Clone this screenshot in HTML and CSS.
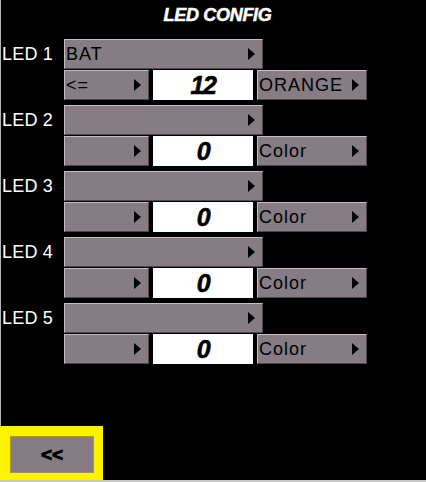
FILE: index.html
```html
<!DOCTYPE html>
<html>
<head>
<meta charset="utf-8">
<link rel="stylesheet" href="styles.css">
</head>
<body>
<div class="screen">
  <div class="title">LED CONFIG</div>
  <div class="groups">
    <div class="group">
      <div class="row">
        <div class="label">LED 1</div>
        <div class="sel sel-main"><span>BAT</span><i class="tri"></i></div>
      </div>
      <div class="row sub">
        <div class="sel sel-op"><span>&lt;=</span><i class="tri"></i></div>
        <div class="val">12</div>
        <div class="sel sel-color"><span>ORANGE</span><i class="tri"></i></div>
      </div>
    </div>
    <div class="group">
      <div class="row">
        <div class="label">LED 2</div>
        <div class="sel sel-main"><span></span><i class="tri"></i></div>
      </div>
      <div class="row sub">
        <div class="sel sel-op"><span></span><i class="tri"></i></div>
        <div class="val">0</div>
        <div class="sel sel-color"><span>Color</span><i class="tri"></i></div>
      </div>
    </div>
    <div class="group">
      <div class="row">
        <div class="label">LED 3</div>
        <div class="sel sel-main"><span></span><i class="tri"></i></div>
      </div>
      <div class="row sub">
        <div class="sel sel-op"><span></span><i class="tri"></i></div>
        <div class="val">0</div>
        <div class="sel sel-color"><span>Color</span><i class="tri"></i></div>
      </div>
    </div>
    <div class="group">
      <div class="row">
        <div class="label">LED 4</div>
        <div class="sel sel-main"><span></span><i class="tri"></i></div>
      </div>
      <div class="row sub">
        <div class="sel sel-op"><span></span><i class="tri"></i></div>
        <div class="val">0</div>
        <div class="sel sel-color"><span>Color</span><i class="tri"></i></div>
      </div>
    </div>
    <div class="group">
      <div class="row">
        <div class="label">LED 5</div>
        <div class="sel sel-main"><span></span><i class="tri"></i></div>
      </div>
      <div class="row sub">
        <div class="sel sel-op"><span></span><i class="tri"></i></div>
        <div class="val">0</div>
        <div class="sel sel-color"><span>Color</span><i class="tri"></i></div>
      </div>
    </div>
  </div>
  <div class="spacer"></div>
  <div class="footer">
    <div class="back-frame">
      <div class="back-btn">&lt;&lt;</div>
    </div>
  </div>
</div>
</body>
</html>
```
FILE: styles.css
```css
html, body {
  margin: 0;
  padding: 0;
  background: #c8c8c8;
  width: 426px;
  height: 482px;
  overflow: hidden;
}
.screen {
  box-sizing: border-box;
  width: 426px;
  height: 480px;
  background: #000;
  border-left: 1px solid #b4b4b4;
  display: flex;
  flex-direction: column;
  font-family: "Liberation Sans", Arial, sans-serif;
}
.title {
  height: 39px;
  box-sizing: border-box;
  padding-top: 4px;
  padding-left: 8px;
  text-align: center;
  color: #fff;
  font-weight: bold;
  font-style: italic;
  font-size: 18px;
  line-height: 22px;
  letter-spacing: -0.3px;
  -webkit-text-stroke: 0.5px #fff;
}
.groups {
  display: flex;
  flex-direction: column;
}
.group {
  display: flex;
  flex-direction: column;
  gap: 1px;
  margin-bottom: 5px;
}
.row {
  display: flex;
  align-items: center;
}
.label {
  width: 63px;
  box-sizing: border-box;
  padding-left: 1px;
  color: #fff;
  font-size: 18px;
  line-height: 30px;
  letter-spacing: 0.2px;
  white-space: nowrap;
}
.sub {
  padding-left: 63px;
}
.sel {
  box-sizing: border-box;
  display: flex;
  align-items: center;
  justify-content: space-between;
  background: #857c84;
  border-top: 1px solid #c4bcc2;
  border-left: 1px solid #c4bcc2;
  border-bottom: 1px solid #4e484c;
  border-right: 1px solid #4e484c;
  color: #000;
  font-size: 18px;
  letter-spacing: 1px;
  padding-left: 1px;
  padding-right: 7px;
  white-space: nowrap;
}
.sel-main {
  width: 199px;
  height: 30px;
}
.sel-op {
  width: 85px;
  height: 30px;
  margin-right: 4px;
}
.sel-color {
  width: 110px;
  height: 30px;
  margin-left: 4px;
}
.tri {
  width: 0;
  height: 0;
  border-top: 6px solid transparent;
  border-bottom: 6px solid transparent;
  border-left: 7px solid #000;
  flex: none;
}
.val {
  width: 100px;
  height: 30px;
  background: #fff;
  color: #000;
  text-align: center;
  font-weight: bold;
  font-style: italic;
  font-size: 25px;
  line-height: 30px;
  letter-spacing: -1.5px;
  -webkit-text-stroke: 0.6px #000;
}
.spacer {
  flex: 1;
}
.footer {
  display: flex;
  height: 54px;
  margin-left: -1px;
}
.back-frame {
  width: 103px;
  height: 54px;
  box-sizing: border-box;
  background: #fff200;
  padding: 10px 9px 7px 10px;
}
.back-btn {
  box-sizing: border-box;
  height: 37px;
  background: #857c84;
  border: 1px solid #a89a3c;
  display: flex;
  align-items: center;
  justify-content: center;
  font-weight: bold;
  font-size: 19px;
  color: #000;
  letter-spacing: 0px;
  -webkit-text-stroke: 0.8px #000;
}
```
